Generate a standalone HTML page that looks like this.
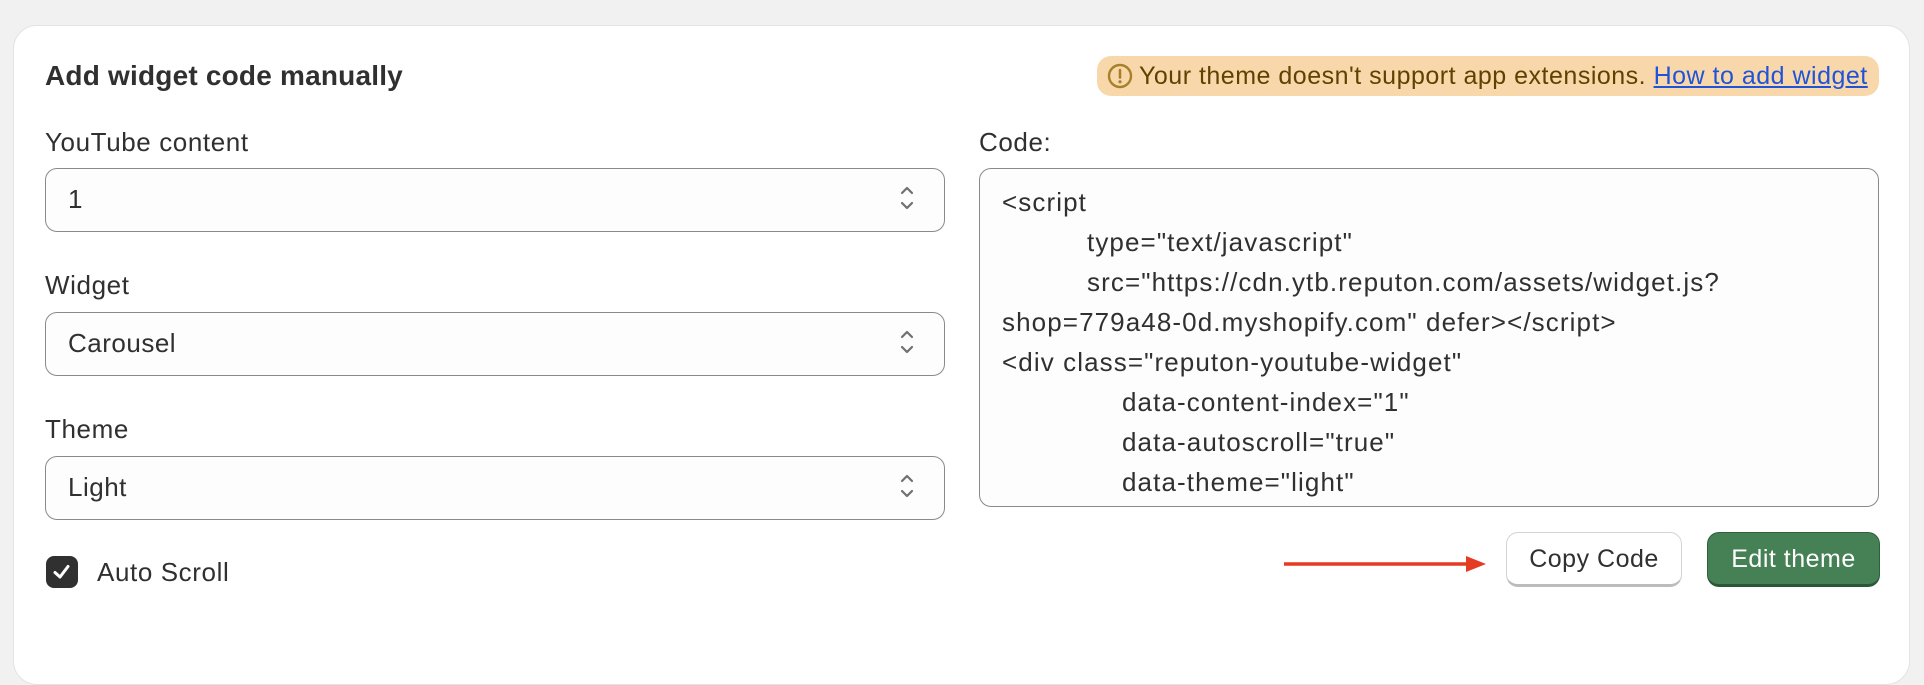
<!DOCTYPE html>
<html><head><meta charset="utf-8"><style>
*{box-sizing:border-box;margin:0;padding:0}
body{width:1924px;height:652px;background:#f1f1f1;font-family:"Liberation Sans",sans-serif;color:#303030;position:relative;overflow:hidden}
.card{position:absolute;left:13px;top:25px;width:1897px;height:660px;background:#fff;border-radius:24px;border:1px solid #e3e3e3}
.a{position:absolute}
.title{left:45px;top:60px;font-size:28px;font-weight:bold;color:#303030;letter-spacing:0.2px}
.lbl{font-size:26px;color:#303030;letter-spacing:0.6px}
.sel{left:45px;width:900px;height:64px;border:1.5px solid #8a8a8a;border-radius:12px;background:#fdfdfd;font-size:26px;letter-spacing:0.5px;padding-left:22px;line-height:61px;color:#303030}
.chev{position:absolute;right:30px;top:16px}
.code{left:979px;top:168px;width:900px;height:339px;border:1.5px solid #8a8a8a;border-radius:12px;background:#fdfdfd;overflow:hidden}
.code div{position:absolute;font-size:26px;letter-spacing:1.1px;color:#303030;white-space:nowrap}
.banner{left:1097px;top:56px;width:782px;height:40px;background:#f8d8aa;border-radius:14px;font-size:25px;letter-spacing:0.5px;color:#5e4200;line-height:40px;padding-left:42px;white-space:nowrap}
.banner a{color:#2054d8;text-decoration:underline}
.btn{top:532px;height:55px;border-radius:12px;font-size:25px;letter-spacing:0.5px;text-align:center;line-height:53px}
</style></head><body>
<div class="card"></div>
<div class="a title">Add widget code manually</div>
<div class="a lbl" style="left:45px;top:127px">YouTube content</div>
<div class="a sel" style="top:168px">1<svg class="chev" width="14" height="26" viewBox="0 0 14 26"><path d="M2 8 L7 3 L12 8 M2 18 L7 23 L12 18" fill="none" stroke="#707070" stroke-width="2.2" stroke-linecap="round" stroke-linejoin="round"/></svg></div>
<div class="a lbl" style="left:45px;top:270px">Widget</div>
<div class="a sel" style="top:312px">Carousel<svg class="chev" width="14" height="26" viewBox="0 0 14 26"><path d="M2 8 L7 3 L12 8 M2 18 L7 23 L12 18" fill="none" stroke="#707070" stroke-width="2.2" stroke-linecap="round" stroke-linejoin="round"/></svg></div>
<div class="a lbl" style="left:45px;top:414px">Theme</div>
<div class="a sel" style="top:456px">Light<svg class="chev" width="14" height="26" viewBox="0 0 14 26"><path d="M2 8 L7 3 L12 8 M2 18 L7 23 L12 18" fill="none" stroke="#707070" stroke-width="2.2" stroke-linecap="round" stroke-linejoin="round"/></svg></div>
<div class="a" style="left:46px;top:556px;width:32px;height:32px;background:#303030;border-radius:8px"><svg width="32" height="32" viewBox="0 0 32 32"><path d="M9 16.5 L14 21 L22 10.5" fill="none" stroke="#fff" stroke-width="3" stroke-linecap="round" stroke-linejoin="round"/></svg></div>
<div class="a lbl" style="left:97px;top:557px">Auto Scroll</div>

<div class="a banner"><svg style="position:absolute;left:10px;top:7px" width="26" height="26" viewBox="0 0 26 26"><circle cx="13" cy="13" r="11" fill="none" stroke="#a7802a" stroke-width="2.4"/><path d="M13 7 V14.5" stroke="#a7802a" stroke-width="2.6" stroke-linecap="round"/><circle cx="13" cy="18.8" r="1.6" fill="#a7802a"/></svg>Your theme doesn't support app extensions. <a>How to add widget</a></div>
<div class="a lbl" style="left:979px;top:127px">Code:</div>
<div class="a code">
<div style="left:22px;top:18px">&lt;script</div>
<div style="left:107px;top:58px">type="text/javascript"</div>
<div style="left:107px;top:98px">src="https://cdn.ytb.reputon.com/assets/widget.js?</div>
<div style="left:22px;top:138px">shop=779a48-0d.myshopify.com" defer&gt;&lt;/script&gt;</div>
<div style="left:22px;top:178px">&lt;div class="reputon-youtube-widget"</div>
<div style="left:142px;top:218px">data-content-index="1"</div>
<div style="left:142px;top:258px">data-autoscroll="true"</div>
<div style="left:142px;top:298px">data-theme="light"</div>
</div>
<svg class="a" style="left:1282px;top:554px" width="206" height="20" viewBox="0 0 206 20"><path d="M2 10 H186" stroke="#e53b22" stroke-width="3.5"/><path d="M184 2 L204 10 L184 18 Z" fill="#e53b22"/></svg>
<div class="a btn" style="left:1506px;width:176px;background:#fff;border:1.5px solid #d4d4d4;border-bottom:3px solid #bcbcbc;color:#303030">Copy Code</div>
<div class="a btn" style="left:1707px;width:173px;background:#468055;border:1.5px solid #2e5f3e;border-bottom:3px solid #2a5738;color:#fff">Edit theme</div>
</body></html>
